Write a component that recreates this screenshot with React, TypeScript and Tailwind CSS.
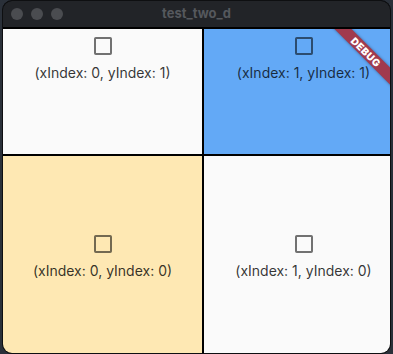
import React from "react";

function CheckIcon({ color }: { color: string }) {
  return (
    <svg width="24" height="24" viewBox="0 0 24 24" className="block">
      <rect x="4" y="4" width="16" height="16" rx="0.8" fill="none" stroke={color} strokeWidth="2" />
    </svg>
  );
}

function Cell({
  bg,
  label,
  top,
  iconColor,
  textColor,
}: {
  bg: string;
  label: string;
  top: boolean;
  iconColor: string;
  textColor: string;
}) {
  return (
    <div className={`flex flex-col items-center ${top ? "justify-start pt-[5px]" : "justify-center pb-[1px]"} ${bg}`}>
      <CheckIcon color={iconColor} />
      <div
        className={`mt-[6px] text-[14px] leading-[17px] ${textColor}`}
        style={{ fontFamily: "Inter, 'Noto Sans', sans-serif" }}
      >
        {label}
      </div>
    </div>
  );
}

export default function App() {
  return (
    <div className="w-[393px] h-[354px] bg-[#2a3039] overflow-hidden relative">
      <div className="ml-[2px] w-[389px] h-[354px] rounded-[10px] border border-[#0e0f11] bg-black overflow-hidden flex flex-col">
        <div className="h-[26px] shrink-0 bg-[#222428] flex items-center relative">
          <div className="flex gap-[8px] pl-[8px]">
            <div className="w-[12px] h-[12px] rounded-full bg-[#4a4c50]" />
            <div className="w-[12px] h-[12px] rounded-full bg-[#4a4c50]" />
            <div className="w-[12px] h-[12px] rounded-full bg-[#4a4c50]" />
          </div>
          <div
            className="absolute inset-0 flex items-center justify-center text-[13px] font-bold text-[#55585d]"
            style={{ fontFamily: "Inter, 'Noto Sans', sans-serif" }}
          >
            test_two_d
          </div>
        </div>
        <div className="mt-[2px] flex-1 overflow-hidden relative">
          <div className="w-[400px] h-[327px] grid grid-cols-[199px_199px] grid-rows-[125px_200px] gap-[2px]">
            <Cell
              bg="bg-[#fafafa]"
              label="(xIndex: 0, yIndex: 1)"
              top
              iconColor="rgba(0,0,0,0.55)"
              textColor="text-[rgba(0,0,0,0.8)]"
            />
            <Cell
              bg="bg-[#63a9f6]"
              label="(xIndex: 1, yIndex: 1)"
              top
              iconColor="rgba(0,0,0,0.55)"
              textColor="text-[rgba(0,0,0,0.75)]"
            />
            <Cell
              bg="bg-[#fee8b3]"
              label="(xIndex: 0, yIndex: 0)"
              top={false}
              iconColor="rgba(0,0,0,0.55)"
              textColor="text-[rgba(0,0,0,0.8)]"
            />
            <Cell
              bg="bg-[#fafafa]"
              label="(xIndex: 1, yIndex: 0)"
              top={false}
              iconColor="rgba(0,0,0,0.55)"
              textColor="text-[rgba(0,0,0,0.8)]"
            />
          </div>
          <div className="absolute left-[313px] top-[17px] w-[100px] h-[12px] rotate-45 bg-[#a13a4e] shadow-[0_0_3px_rgba(0,0,0,0.4)] flex items-center justify-center">
            <span
              className="text-white text-[10px] leading-[12px] font-black tracking-[0.5px]"
              style={{ fontFamily: "Inter, 'Noto Sans', sans-serif" }}
            >
              DEBUG
            </span>
          </div>
        </div>
      </div>
    </div>
  );
}
